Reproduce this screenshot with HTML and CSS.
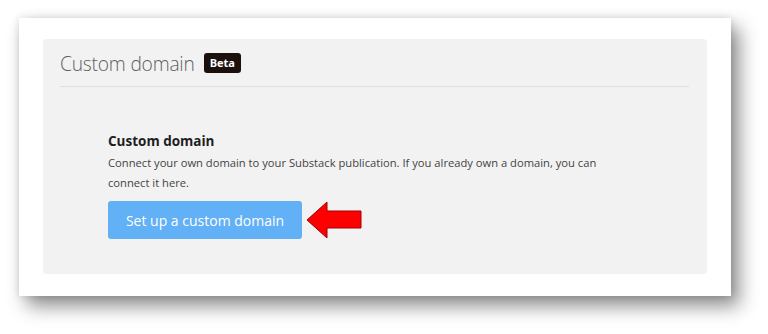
FILE: index.html
```html
<!DOCTYPE html>
<html>
<head>
<meta charset="utf-8">
<link rel="stylesheet" href="styles.css">
</head>
<body>
<div class="card">
  <div class="panel">
    <div class="panel-header">
      <h1 class="title">Custom domain</h1>
      <span class="badge">Beta</span>
    </div>
    <div class="section">
      <h2 class="section-title">Custom domain</h2>
      <p class="desc">Connect your own domain to your Substack publication. If you already own a domain, you can connect it here.</p>
      <div class="action-row">
        <button class="btn">Set up a custom domain</button>
        <svg class="arrow" width="56" height="38" viewBox="0 0 56 38">
          <path d="M1 19 L21 1 L21 10 L55 10 L55 27 L21 27 L21 37 Z" fill="#ff0000" stroke="#a00000" stroke-width="1"/>
        </svg>
      </div>
    </div>
  </div>
</div>
</body>
</html>
```
FILE: styles.css
```css
html, body {
  margin: 0;
  padding: 0;
  background: #ffffff;
}
body {
  box-sizing: border-box;
  min-height: 334px;
  padding: 18px 37px 0 19px;
  font-family: "Open Sans", "Noto Sans", sans-serif;
}
.card {
  width: 712px;
  height: 278px;
  box-sizing: border-box;
  background: #ffffff;
  padding: 21px 24px 22px 24px;
  box-shadow: 0 0 8px rgba(0,0,0,0.12), 8px 10px 18px rgba(0,0,0,0.45);
}
.panel {
  height: 235px;
  box-sizing: border-box;
  background: #f2f2f2;
  border-radius: 4px;
  padding: 0 18px 0 17px;
}
.panel-header {
  display: flex;
  align-items: center;
  gap: 9px;
  height: 46px;
  padding-top: 1px;
  border-bottom: 1px solid #e0e0e0;
}
.title {
  margin: 0;
  font-size: 19.2px;
  font-weight: 300;
  color: #606060;
  letter-spacing: -0.2px;
}
.badge {
  background: #1b100c;
  color: #ffffff;
  font-size: 11px;
  font-weight: 700;
  border-radius: 3px;
  padding: 2px 6px 3px;
  line-height: 15px;
}
.section {
  padding: 45px 0 0 48px;
}
.section-title {
  margin: 0;
  font-size: 13.5px;
  font-weight: 700;
  color: #1e1e1e;
  line-height: 18px;
}
.desc {
  margin: 3px 0 0 0;
  width: 500px;
  font-size: 11.2px;
  line-height: 20px;
  color: #444444;
}
.action-row {
  display: flex;
  align-items: center;
  gap: 4px;
  margin-top: 8px;
}
.btn {
  width: 194px;
  height: 38px;
  border: none;
  border-radius: 3px;
  background: #62b0f5;
  color: #ffffff;
  font-family: "Open Sans", "Noto Sans", sans-serif;
  font-size: 14px;
}
.arrow {
  display: block;
}
```
